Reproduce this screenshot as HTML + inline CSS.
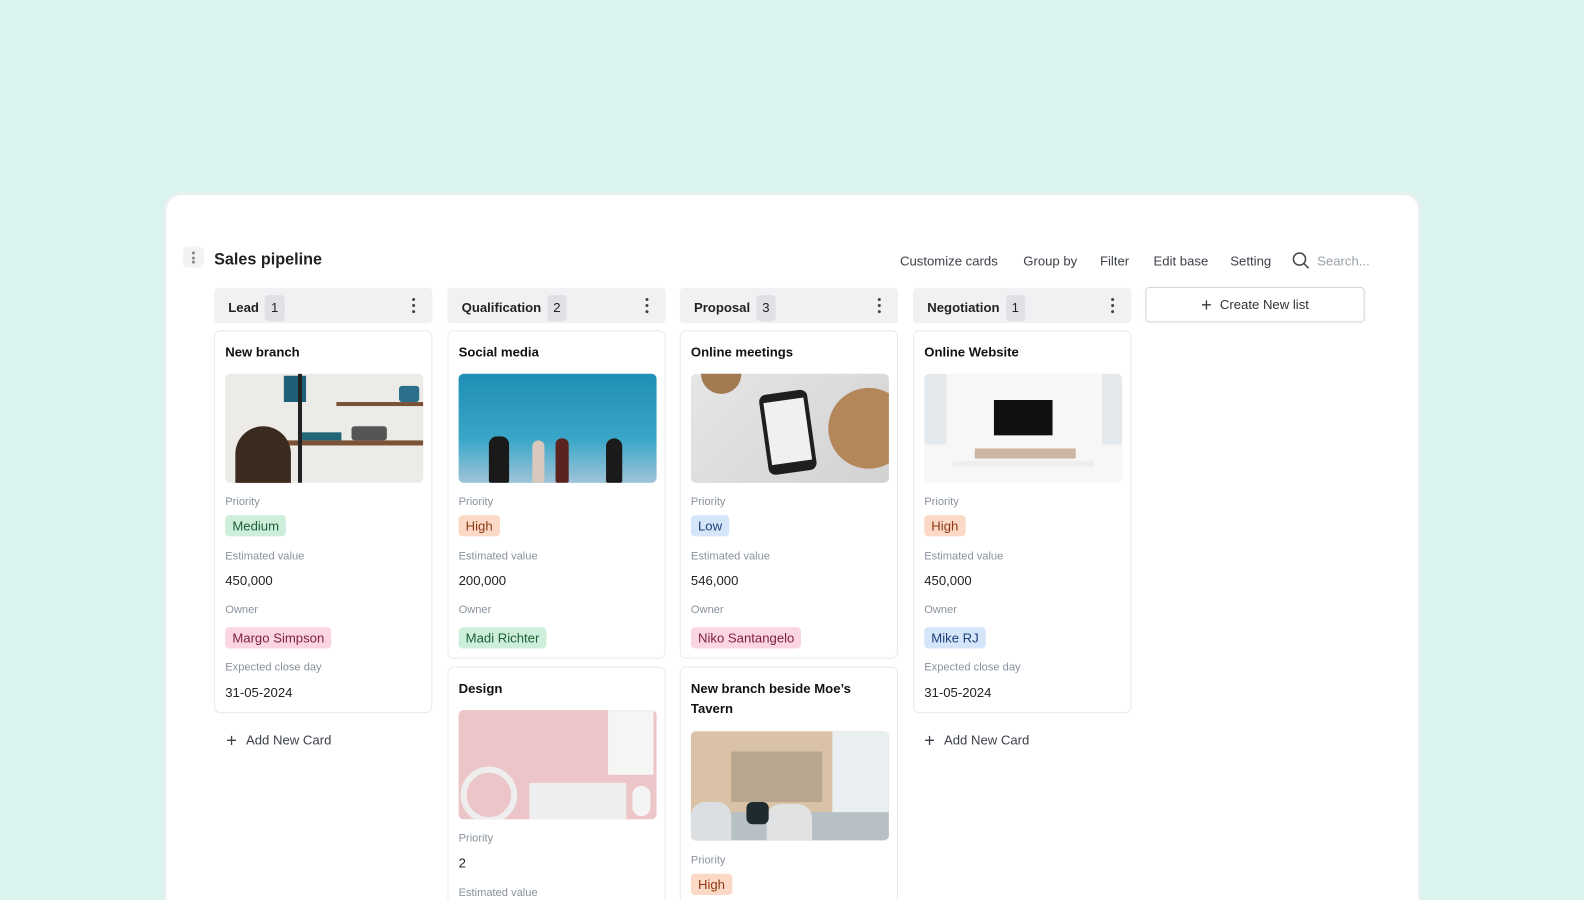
<!DOCTYPE html>
<html><head><meta charset="utf-8"><style>
*{box-sizing:border-box;margin:0;padding:0}
html,body{width:1584px;height:900px;overflow:hidden}
body{background:#daf3ef;font-family:"Liberation Sans",sans-serif;position:relative;color:#1f2328}
#w{position:absolute;left:0;top:0;width:1584px;height:900px;transform:scale(1.0101);transform-origin:0 0}
.panel{position:absolute;left:162px;top:190px;width:1245px;height:718px;background:#fff;border-radius:18px 18px 0 0;border:3px solid #eaf0ef;border-bottom:none}
.a{position:absolute}
.dots{position:absolute;left:181px;top:244px;width:21px;height:21px;background:#f2f3f5;border-radius:5px}
.title{left:212px;top:249px;font-size:16px;font-weight:bold;color:#222}
.tb{top:251px;font-size:13px;color:#3c4148}
.col{position:absolute;top:285px;width:216px;height:35px;background:#f0f1f3;border-radius:4px;font-size:13px;font-weight:bold;color:#222}
.col span.n{display:inline-block;background:#dfe1e5;border-radius:4px;font-weight:normal;padding:3px 6px;margin-left:6px;font-size:13px}
.col .t{position:absolute;left:14px;top:7px;line-height:20px}
.vd{position:absolute;right:17px;top:10px;width:3px}
.vd i{display:block;width:3px;height:3px;border-radius:50%;background:#444;margin-bottom:3px}
.card{position:absolute;width:216px;background:#fff;border:1px solid #e8eaed;border-radius:6px}
.card .h{position:absolute;left:10px;font-size:13px;font-weight:bold;color:#111;line-height:20px}
.card .im{position:absolute;left:10px;width:196px;height:108px;border-radius:5px;overflow:hidden}
.card .l{position:absolute;left:10px;font-size:11px;color:#8a929c;line-height:14px}
.card .v{position:absolute;left:10px;font-size:13px;color:#222;line-height:16px}
.card .b{position:absolute;left:10px;font-size:13px;line-height:21px;height:21px;padding:0 7px;border-radius:4px}
.g{background:#cdeedb;color:#1d5e33}.o{background:#fcd9c6;color:#8a3a12}.bl{background:#d5e6fb;color:#1c3f78}.p{background:#fbd5e0;color:#7a1f3c}
.add{font-size:13px;color:#3c4148;top:723px}
</style></head><body><div id="w">
<div class="panel"></div>
<div class="dots"><div style="position:absolute;left:9px;top:5px;width:3px"><i style="display:block;width:3px;height:3px;border-radius:50%;background:#888;margin-bottom:1.5px"></i><i style="display:block;width:3px;height:3px;border-radius:50%;background:#888;margin-bottom:1.5px"></i><i style="display:block;width:3px;height:3px;border-radius:50%;background:#888"></i></div></div>
<div class="a title">Sales pipeline</div>
<div class="a tb" style="left:891px">Customize cards</div>
<div class="a tb" style="left:1013px">Group by</div>
<div class="a tb" style="left:1089px">Filter</div>
<div class="a tb" style="left:1142px">Edit base</div>
<div class="a tb" style="left:1218px">Setting</div>
<svg class="a" style="left:1279px;top:249px" width="18" height="18" viewBox="0 0 18 18"><circle cx="7.5" cy="7.5" r="6" fill="none" stroke="#444" stroke-width="1.5"/><line x1="12" y1="12" x2="16.5" y2="16.5" stroke="#444" stroke-width="1.5"/></svg>
<div class="a tb" style="left:1304px;color:#9aa1a9">Search...</div>

<div class="col" style="left:212px"><div class="t">Lead<span class="n">1</span></div><div class="vd"><i></i><i></i><i></i></div></div>
<div class="col" style="left:443px"><div class="t">Qualification<span class="n">2</span></div><div class="vd"><i></i><i></i><i></i></div></div>
<div class="col" style="left:673px"><div class="t">Proposal<span class="n">3</span></div><div class="vd"><i></i><i></i><i></i></div></div>
<div class="col" style="left:904px"><div class="t">Negotiation<span class="n">1</span></div><div class="vd"><i></i><i></i><i></i></div></div>
<div class="a" style="left:1134px;top:284px;width:217px;height:35px;border:1px solid #d4d7db;border-radius:4px;font-size:13px;color:#333;text-align:center;line-height:33px;box-shadow:0 1px 2px rgba(0,0,0,.05)"><span style="font-size:18px;vertical-align:-2px;margin-right:8px">+</span>Create New list</div>

<div class="card" style="left:212px;top:327px;height:379px">
<div class="h" style="top:11px">New branch</div>
<div class="im" style="top:42px;background:#ecebe8">
<div class="a" style="left:110px;top:28px;width:86px;height:4px;background:#7a5236"></div>
<div class="a" style="left:45px;top:66px;width:151px;height:5px;background:#7a5236"></div>
<div class="a" style="left:58px;top:2px;width:22px;height:26px;background:#1f5f78"></div>
<div class="a" style="left:172px;top:12px;width:20px;height:16px;background:#2c6f8a;border-radius:3px"></div>
<div class="a" style="left:125px;top:52px;width:35px;height:14px;background:#555;border-radius:3px"></div>
<div class="a" style="left:75px;top:58px;width:40px;height:8px;background:#22667a"></div>
<div class="a" style="left:72px;top:0;width:4px;height:108px;background:#222"></div>
<div class="a" style="left:10px;top:52px;width:55px;height:70px;background:#3b2a1e;border-radius:28px 28px 0 0"></div>
</div>
<div class="l" style="top:162px">Priority</div>
<div class="b g" style="top:182px">Medium</div>
<div class="l" style="top:216px">Estimated value</div>
<div class="v" style="top:239px">450,000</div>
<div class="l" style="top:269px">Owner</div>
<div class="b p" style="top:293px">Margo Simpson</div>
<div class="l" style="top:326px">Expected close day</div>
<div class="v" style="top:350px">31-05-2024</div>
</div>
<div class="a add" style="left:224px"><span style="font-size:18px;vertical-align:-2px;margin-right:9px">+</span>Add New Card</div>

<div class="card" style="left:443px;top:327px;height:325px">
<div class="h" style="top:11px">Social media</div>
<div class="im" style="top:42px;background:linear-gradient(180deg,#1f8fb5 0%,#3aa6c8 60%,#9fc4d8 100%)">
<div class="a" style="left:30px;top:62px;width:20px;height:46px;background:#1a1a1a;border-radius:8px 8px 2px 2px"></div>
<div class="a" style="left:73px;top:66px;width:12px;height:42px;background:#d8c8bd;border-radius:6px 6px 2px 2px"></div>
<div class="a" style="left:96px;top:64px;width:13px;height:44px;background:#5a2320;border-radius:6px 6px 2px 2px"></div>
<div class="a" style="left:146px;top:64px;width:16px;height:44px;background:#1a1a1a;border-radius:8px 8px 2px 2px"></div>
</div>
<div class="l" style="top:162px">Priority</div>
<div class="b o" style="top:182px">High</div>
<div class="l" style="top:216px">Estimated value</div>
<div class="v" style="top:239px">200,000</div>
<div class="l" style="top:269px">Owner</div>
<div class="b g" style="top:293px">Madi Richter</div>
</div>
<div class="card" style="left:443px;top:660px;height:260px;border-radius:6px 6px 0 0">
<div class="h" style="top:11px">Design</div>
<div class="im" style="top:42px;background:#ecc5c9">
<div class="a" style="left:148px;top:0;width:45px;height:64px;background:#f5f5f3"></div>
<div class="a" style="left:70px;top:72px;width:96px;height:36px;background:#eeeeee"></div>
<div class="a" style="left:2px;top:56px;width:56px;height:56px;border:6px solid #eee;border-radius:50%"></div>
<div class="a" style="left:172px;top:75px;width:18px;height:30px;background:#f4f4f4;border-radius:9px"></div>
</div>
<div class="l" style="top:162px">Priority</div>
<div class="v" style="top:186px">2</div>
<div class="l" style="top:216px">Estimated value</div>
</div>

<div class="card" style="left:673px;top:327px;height:325px">
<div class="h" style="top:11px">Online meetings</div>
<div class="im" style="top:42px;background:linear-gradient(135deg,#e6e6e6,#d2d2d2)">
<div class="a" style="left:72px;top:18px;width:48px;height:80px;background:#1e1e1e;border-radius:7px;transform:rotate(-8deg)"><div style="position:absolute;left:4px;top:8px;width:40px;height:62px;background:#f0f0f0"></div></div>
<div class="a" style="left:136px;top:14px;width:80px;height:80px;background:#b4875a;border-radius:50%"></div>
<div class="a" style="left:10px;top:-20px;width:40px;height:40px;background:#a27a52;border-radius:50%"></div>
</div>
<div class="l" style="top:162px">Priority</div>
<div class="b bl" style="top:182px">Low</div>
<div class="l" style="top:216px">Estimated value</div>
<div class="v" style="top:239px">546,000</div>
<div class="l" style="top:269px">Owner</div>
<div class="b p" style="top:293px">Niko Santangelo</div>
</div>
<div class="card" style="left:673px;top:660px;height:260px;border-radius:6px 6px 0 0">
<div class="h" style="top:11px;width:190px">New branch beside Moe’s Tavern</div>
<div class="im" style="top:63px;background:#d9c2a6">
<div class="a" style="left:140px;top:0;width:56px;height:108px;background:#e9eef0"></div>
<div class="a" style="left:40px;top:20px;width:90px;height:50px;background:#b8a68f"></div>
<div class="a" style="left:0;top:80px;width:196px;height:28px;background:#b7c0c4"></div>
<div class="a" style="left:0;top:70px;width:40px;height:38px;background:#dcdfe1;border-radius:14px 14px 0 0"></div>
<div class="a" style="left:75px;top:72px;width:45px;height:36px;background:#e0e2e4;border-radius:14px 14px 0 0"></div>
<div class="a" style="left:55px;top:70px;width:22px;height:22px;background:#1e2a2e;border-radius:6px"></div>
</div>
<div class="l" style="top:184px">Priority</div>
<div class="b o" style="top:204px">High</div>
</div>

<div class="card" style="left:904px;top:327px;height:379px">
<div class="h" style="top:11px">Online Website</div>
<div class="im" style="top:42px;background:#f7f7f7">
<div class="a" style="left:0;top:0;width:22px;height:70px;background:#e3e9ec"></div>
<div class="a" style="left:176px;top:0;width:20px;height:70px;background:#e3e9ec"></div>
<div class="a" style="left:69px;top:26px;width:58px;height:35px;background:#111"></div>
<div class="a" style="left:28px;top:86px;width:140px;height:6px;background:#eee"></div>
<div class="a" style="left:50px;top:74px;width:100px;height:10px;background:#b08a6a;opacity:.6"></div>
</div>
<div class="l" style="top:162px">Priority</div>
<div class="b o" style="top:182px">High</div>
<div class="l" style="top:216px">Estimated value</div>
<div class="v" style="top:239px">450,000</div>
<div class="l" style="top:269px">Owner</div>
<div class="b bl" style="top:293px">Mike RJ</div>
<div class="l" style="top:326px">Expected close day</div>
<div class="v" style="top:350px">31-05-2024</div>
</div>
<div class="a add" style="left:915px"><span style="font-size:18px;vertical-align:-2px;margin-right:9px">+</span>Add New Card</div>
</div></body></html>
